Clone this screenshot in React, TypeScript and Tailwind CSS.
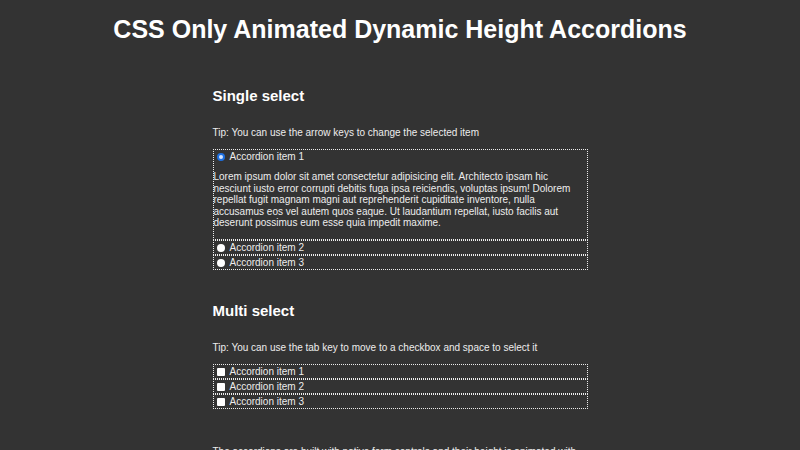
import { useState } from "react";

const items = ["Accordion item 1", "Accordion item 2", "Accordion item 3"];

const lorem =
  "Lorem ipsum dolor sit amet consectetur adipisicing elit. Architecto ipsam hic nesciunt iusto error corrupti debitis fuga ipsa reiciendis, voluptas ipsum! Dolorem repellat fugit magnam magni aut reprehenderit cupiditate inventore, nulla accusamus eos vel autem quos eaque. Ut laudantium repellat, iusto facilis aut deserunt possimus eum esse quia impedit maxime.";

function SingleSelect() {
  const [open, setOpen] = useState(0);

  return (
    <div>
      {items.map((label, i) => (
        <div key={label} className="border border-dotted border-[#ececec]">
          <label className="flex h-[13px] items-center">
            <input
              type="radio"
              name="single"
              checked={open === i}
              onChange={() => setOpen(i)}
              className="ml-[3px] mr-[5px] h-[8px] w-[8px] shrink-0 appearance-none rounded-full bg-white checked:border-[2px] checked:border-[#1d6fe0] checked:bg-[#d6e6ff]"
            />
            <span>{label}</span>
          </label>
          {open === i && <p className="mt-[8px] mb-[10.5px]">{lorem}</p>}
        </div>
      ))}
    </div>
  );
}

function MultiSelect() {
  const [open, setOpen] = useState<number[]>([]);

  const toggle = (i: number) =>
    setOpen((prev) => (prev.includes(i) ? prev.filter((x) => x !== i) : [...prev, i]));

  return (
    <div>
      {items.map((label, i) => (
        <div key={label} className="border border-dotted border-[#ececec]">
          <label className="flex h-[13px] items-center">
            <input
              type="checkbox"
              checked={open.includes(i)}
              onChange={() => toggle(i)}
              className="ml-[3px] mr-[5px] h-[8px] w-[8px] shrink-0 appearance-none rounded-[1px] bg-white checked:bg-[#1d6fe0]"
            />
            <span>{label}</span>
          </label>
          {open.includes(i) && <p className="mt-[8px] mb-[10.5px]">{lorem}</p>}
        </div>
      ))}
    </div>
  );
}

export default function App() {
  return (
    <div className="min-h-screen bg-[#333333] pb-10 font-['Liberation_Sans',Arial,sans-serif] text-[10px] leading-[11.5px] text-[#ededed]">
      <h1 className="pt-[15px] text-center text-[25px] leading-[28.75px] font-bold text-white">
        CSS Only Animated Dynamic Height Accordions
      </h1>

      <div className="mx-auto w-[375px]">
        {/* single */}
        <section className="mt-[43.5px]">
          <h2 className="mb-[22px] text-[15px] leading-[17.25px] font-bold text-white">Single select</h2>
          <p className="mb-[11px]">Tip: You can use the arrow keys to change the selected item</p>
          <SingleSelect />
        </section>

        {/* multi */}
        <section className="mt-[32.25px]">
          <h2 className="mb-[22px] text-[15px] leading-[17.25px] font-bold text-white">Multi select</h2>
          <p className="mb-[11px]">Tip: You can use the tab key to move to a checkbox and space to select it</p>
          <MultiSelect />
        </section>

        <p className="mt-[37px]">
          The accordions are built with native form controls and their height is animated with CSS only, so no
          JavaScript is needed to measure the content.
        </p>
      </div>
    </div>
  );
}
